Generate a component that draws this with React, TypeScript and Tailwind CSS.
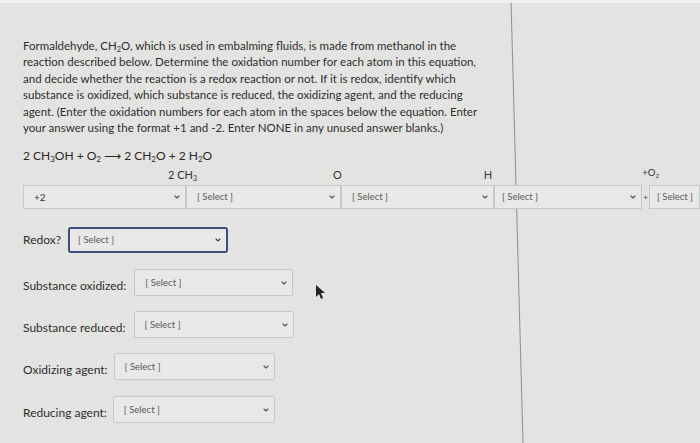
import { ChevronDown } from "lucide-react";

type BoxProps = {
  label?: string;
  className?: string;
  textClass?: string;
};

function SelectBox({ label = "[ Select ]", className = "", textClass = "text-[#5a5a5a]" }: BoxProps) {
  return (
    <div
      className={`flex shrink-0 items-center justify-between border border-[#c8c8c5] bg-[#e8e8e6] pl-[10px] pr-[4px] ${className}`}
    >
      <span className={`text-[9.5px] ${textClass}`}>{label}</span>
      <ChevronDown size={8} strokeWidth={3.5} className="text-[#555]" />
    </div>
  );
}

function Field({ name, gap, boxWidth, mt }: { name: string; gap: string; boxWidth: string; mt: string }) {
  return (
    <div className={`flex items-center ${mt}`}>
      <span className={`translate-y-[3px] text-[12px] text-[#2e2e2e] ${gap}`}>{name}</span>
      <SelectBox className={`h-[27px] rounded-[2px] ${boxWidth}`} />
    </div>
  );
}

const lines = [
  "reaction described below. Determine the oxidation number for each atom in this equation,",
  "and decide whether the reaction is a redox reaction or not. If it is redox, identify which",
  "substance is oxidized, which substance is reduced, the oxidizing agent, and the reducing",
  "agent. (Enter the oxidation numbers for each atom in the spaces below the equation. Enter",
  "your answer using the format +1 and -2. Enter NONE in any unused answer blanks.)",
];

export default function App() {
  return (
    <div className="relative h-[443px] w-[700px] overflow-hidden bg-[#e3e3e1] font-['Lato','Liberation_Sans',sans-serif] text-[#2b2b2b]">
      <svg className="pointer-events-none absolute inset-0" width="700" height="443">
        <line x1="511" y1="0" x2="523" y2="443" stroke="#8e8e8c" strokeWidth="1" />
      </svg>

      <div className="relative h-[3px] bg-[#efefed]" />

      <div className="relative pl-[23px] pt-[35px]">
        <div className="whitespace-nowrap text-[11.5px] leading-[16.4px] text-[#2e2e2e]">
          <p>
            Formaldehyde, CH<sub className="text-[7.5px]">2</sub>O, which is used in embalming fluids, is made from
            methanol in the
          </p>
          {lines.map((l) => (
            <p key={l}>{l}</p>
          ))}
        </div>

        <p className="mt-[13px] text-[12px] leading-[14px]">
          2 CH<sub className="text-[8px]">3</sub>OH + O<sub className="text-[8px]">2</sub> ⟶ 2 CH
          <sub className="text-[8px]">2</sub>O + 2 H<sub className="text-[8px]">2</sub>O
        </p>

        <div className="mt-[4px] flex h-[14px] items-end text-[11px] leading-[12px] text-[#333]">
          <span className="ml-[145px]">
            2 CH<sub className="text-[7px]">3</sub>
          </span>
          <span className="ml-[136px]">O</span>
          <span className="ml-[142px]">H</span>
          <span className="ml-[150px] -translate-y-[2px] text-[9.5px]">
            +O<sub className="text-[6.5px]">2</sub>
          </span>
        </div>

        <div className="mt-[4px] flex h-[24px] items-stretch">
          <SelectBox label="+2" className="w-[163px]" textClass="text-[#333] text-[10px]" />
          <SelectBox className="w-[155px]" />
          <SelectBox className="w-[153px]" />
          <SelectBox className="w-[148px] !pl-[7px]" />
          <span className="flex w-[7px] items-center justify-center text-[8px] text-[#444]">+</span>
          <div className="flex flex-1 items-center border border-[#c8c8c5] bg-[#e8e8e6] pl-[7px] text-[9.5px] text-[#5a5a5a]">
            [ Select ]
          </div>
        </div>

        <div className="mt-[18px] flex items-center">
          <span className="mr-[7px] text-[12px] text-[#2e2e2e]">Redox?</span>
          <div className="flex h-[26px] w-[160px] items-center justify-between rounded-[3px] border-2 border-[#3f4d7c] bg-[#e9e9e8] pl-[8px] pr-[4px]">
            <span className="text-[9.5px] text-[#5a5a5a]">[ Select ]</span>
            <ChevronDown size={8} strokeWidth={3.5} className="text-[#444]" />
          </div>
        </div>

        <Field name="Substance oxidized:" gap="mr-[8px]" boxWidth="w-[159px]" mt="mt-[16px]" />
        <Field name="Substance reduced:" gap="mr-[8px]" boxWidth="w-[160px]" mt="mt-[15px]" />
        <Field name="Oxidizing agent:" gap="mr-[6px]" boxWidth="w-[161px]" mt="mt-[15px]" />
        <Field name="Reducing agent:" gap="mr-[6px]" boxWidth="w-[162px]" mt="mt-[16px]" />
      </div>

      <svg className="pointer-events-none absolute inset-0" width="700" height="443">
        <path d="M316 285 L316 297 L319 294 L321 299 L323 298 L321 293 L325 293 Z" fill="#222" />
      </svg>
    </div>
  );
}
